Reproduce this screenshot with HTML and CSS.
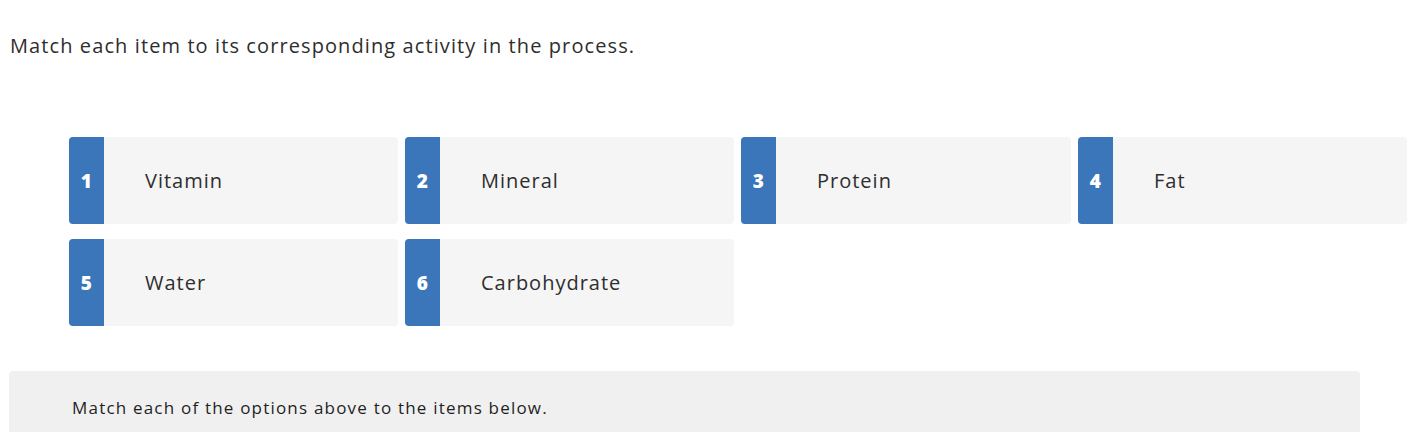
FILE: index.html
```html
<!DOCTYPE html>
<html>
<head>
<meta charset="utf-8">
<link rel="stylesheet" href="styles.css">
</head>
<body>
<div class="page">
  <p class="prompt">Match each item to its corresponding activity in the process.</p>
  <div class="options">
    <div class="card"><span class="num">1</span><span class="label">Vitamin</span></div>
    <div class="card"><span class="num">2</span><span class="label">Mineral</span></div>
    <div class="card"><span class="num">3</span><span class="label">Protein</span></div>
    <div class="card"><span class="num">4</span><span class="label">Fat</span></div>
    <div class="card"><span class="num">5</span><span class="label">Water</span></div>
    <div class="card"><span class="num">6</span><span class="label">Carbohydrate</span></div>
  </div>
  <div class="panel">
    <p class="panel-text">Match each of the options above to the items below.</p>
  </div>
</div>
</body>
</html>
```
FILE: styles.css
```css
html, body {
  margin: 0;
  padding: 0;
  background: #fff;
}
.page {
  padding: 0 0 0 9px;
  font-family: "Open Sans", sans-serif;
  color: #333;
}
.prompt {
  margin: 0;
  padding-top: 32px;
  font-size: 20px;
  line-height: 28px;
  padding-left: 1px;
  letter-spacing: 1.1px;
  color: #2e2e2e;
}
.options {
  margin: 77px 0 0 60px;
  width: 1339px;
  display: grid;
  grid-template-columns: 329px 329px 330px 329px;
  column-gap: 7px;
  row-gap: 15px;
}
.card {
  display: flex;
  align-items: center;
  height: 87px;
  background: #f5f5f5;
  border-radius: 4px;
  overflow: hidden;
}
.num {
  flex: 0 0 35px;
  align-self: stretch;
  display: flex;
  align-items: center;
  justify-content: center;
  background: #3a76b9;
  color: #fff;
  font-weight: 800;
  font-size: 19px;
  letter-spacing: 0.5px;
}
.label {
  margin-left: 41px;
  font-size: 20px;
  letter-spacing: 1px;
  color: #2e2e2e;
}
.panel {
  margin-top: 45px;
  width: 1351px;
  height: 80px;
  background: #f0f0f0;
  border-radius: 4px 4px 0 0;
  padding-top: 25px;
  box-sizing: border-box;
}
.panel-text {
  margin: 0 0 0 63px;
  font-size: 17px;
  letter-spacing: 1.2px;
  color: #1f1f1f;
}
```
